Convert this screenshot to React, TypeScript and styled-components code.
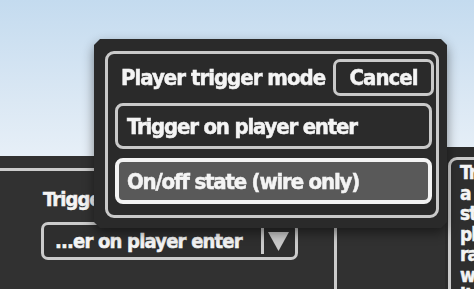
import styled, { createGlobalStyle } from 'styled-components';

const gameFont = `"DejaVu Sans Condensed", "DejaVu Sans", "Liberation Sans", sans-serif`;

const GlobalStyle = createGlobalStyle`
  html, body {
    margin: 0;
    padding: 0;
  }
  body {
    font-family: ${gameFont};
    font-weight: 700;
    color: #f4f4f4;
    -webkit-text-stroke: 0.5px #f4f4f4;
  }
`;

const ArrowDown = () => (
  <svg width="21" height="19" viewBox="0 0 21 19">
    <polygon points="0,0 21,0 10.5,19" fill="#c9c9c9" />
  </svg>
);

const App = () => {
  return (
    <>
      <GlobalStyle />
      <Scene>
        <Dock>
          <EditorPanel>
            <EditorFrame>
              <FieldLabel>Trigger mode</FieldLabel>
              <Dropdown>
                <DropdownValue>...er on player enter</DropdownValue>
                <DropdownDivider />
                <DropdownArrow>
                  <ArrowDown />
                </DropdownArrow>
              </Dropdown>
            </EditorFrame>
          </EditorPanel>
          <InfoPanel>
            <InfoFrame>
              <InfoText>
                <span>Triggers when</span>
                <span>a lever</span>
                <span>state changes,</span>
                <span>player enters</span>
                <span>range or</span>
                <span>walks off</span>
                <span>it.</span>
              </InfoText>
            </InfoFrame>
          </InfoPanel>
        </Dock>

        <ModalShadow>
          <Modal>
            <ModalFrame>
              <ModalHeader>
                <ModalTitle>Player trigger mode</ModalTitle>
                <CancelButton>Cancel</CancelButton>
              </ModalHeader>
              <OptionList>
                <OptionButton>Trigger on player enter</OptionButton>
                <OptionButton $selected>On/off state (wire only)</OptionButton>
              </OptionList>
            </ModalFrame>
          </Modal>
        </ModalShadow>
      </Scene>
    </>
  );
};
export default App;

const Scene = styled.div`
  position: relative;
  width: 474px;
  height: 289px;
  overflow: hidden;
  display: flex;
  align-items: flex-end;
  background: linear-gradient(180deg, #c4dbef 0%, #dbe8f4 35%, #f3f7fb 75%, #fbfcfd 100%);
`;

const Dock = styled.div`
  display: flex;
  align-items: flex-end;
  width: 100%;
  height: 142px;
`;

const EditorPanel = styled.div`
  flex: 1;
  height: 133px;
  padding-top: 12px;
  background: #313131;
  overflow: hidden;
  box-sizing: border-box;
`;

const EditorFrame = styled.div`
  box-sizing: border-box;
  width: 349px;
  height: 160px;
  margin-left: -12px;
  padding: 16px 0 0 52px;
  border: 3px solid #cbcbcb;
  border-radius: 10px;
`;

const FieldLabel = styled.div`
  font-size: 20px;
  line-height: 24px;
  letter-spacing: -0.9px;
  white-space: nowrap;
`;

const Dropdown = styled.div`
  display: flex;
  align-items: center;
  box-sizing: border-box;
  width: 257px;
  height: 38px;
  margin: 11px 0 0 -2px;
  border: 3px solid #cbcbcb;
  border-radius: 7px;
  background: #2e2e2e;
`;

const DropdownValue = styled.div`
  flex: 1;
  padding-left: 11px;
  font-size: 20px;
  letter-spacing: -0.8px;
  white-space: nowrap;
  overflow: hidden;
`;

const DropdownDivider = styled.div`
  width: 3px;
  height: 26px;
  background: #cbcbcb;
`;

const DropdownArrow = styled.div`
  display: flex;
  padding: 0 6px 0 4px;
`;

const InfoPanel = styled.div`
  box-sizing: border-box;
  width: 29px;
  height: 142px;
  padding: 10px 0 0 3px;
  background: #2c2c2c;
  overflow: hidden;
`;

const InfoFrame = styled.div`
  box-sizing: border-box;
  width: 160px;
  height: 160px;
  padding: 2px 0 0 9px;
  border: 3px solid #cbcbcb;
  border-radius: 9px;
  background: #2e2e2e;
`;

const InfoText = styled.div`
  display: flex;
  flex-direction: column;
  font-size: 19px;
  line-height: 20.5px;
  letter-spacing: -0.9px;
  white-space: nowrap;
`;

const ModalShadow = styled.div`
  position: absolute;
  left: 94px;
  top: 39px;
  filter: drop-shadow(0 5px 6px rgba(0, 0, 0, 0.45));
`;

const Modal = styled.div`
  box-sizing: border-box;
  width: 353px;
  height: 189px;
  padding: 12px 8px 10px 11px;
  background: #2a2a2a;
  clip-path: polygon(
    6px 0,
    calc(100% - 6px) 0,
    100% 6px,
    100% calc(100% - 6px),
    calc(100% - 6px) 100%,
    6px 100%,
    0 calc(100% - 6px),
    0 6px
  );
`;

const ModalFrame = styled.div`
  box-sizing: border-box;
  height: 100%;
  padding: 5px 4px 0 7px;
  border: 3px solid #c9c9c9;
  border-radius: 9px;
`;

const ModalHeader = styled.div`
  display: flex;
  align-items: center;
  justify-content: space-between;
  height: 37px;
`;

const ModalTitle = styled.div`
  padding-left: 6px;
  font-size: 22px;
  letter-spacing: -1px;
  white-space: nowrap;
`;

const CancelButton = styled.div`
  display: flex;
  align-items: center;
  justify-content: center;
  box-sizing: border-box;
  width: 101px;
  height: 37px;
  margin-right: -2px;
  border: 3px solid #c9c9c9;
  border-radius: 7px;
  font-size: 22px;
  letter-spacing: -1px;
`;

const OptionList = styled.div`
  display: flex;
  flex-direction: column;
  gap: 9px;
  margin-top: 7px;
`;

const OptionButton = styled.div<{ $selected?: boolean }>`
  display: flex;
  align-items: center;
  box-sizing: border-box;
  height: 46px;
  padding-left: ${(p) => (p.$selected ? '8px' : '9px')};
  border: ${(p) => (p.$selected ? '4px solid #f3f3f3' : '3px solid #c9c9c9')};
  border-radius: 8px;
  background: ${(p) => (p.$selected ? '#595959' : '#2b2b2b')};
  font-size: 22px;
  letter-spacing: -1.2px;
  white-space: nowrap;
`;
